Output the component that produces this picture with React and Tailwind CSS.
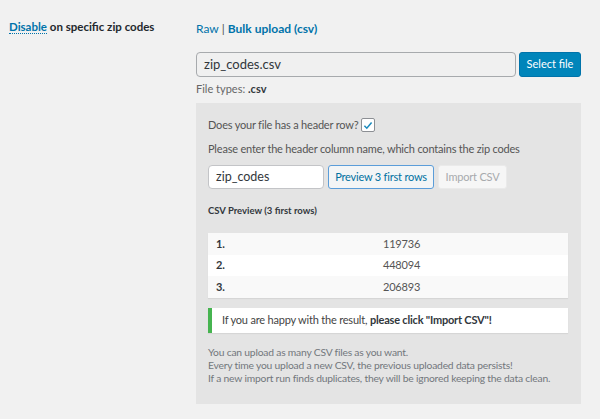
import React from 'react';

const font = { fontFamily: 'Lato, "Noto Sans", sans-serif' };

export default function App() {
  return (
    <div className="w-[600px] h-[419px] bg-[#f1f1f1] text-[#444] overflow-hidden flex whitespace-nowrap" style={font}>
      {/* Label column */}
      <div className="w-[196px] pl-[9px] pt-[13px]">
        <span className="text-[11.5px] font-bold text-[#23282d]">
          <span className="text-[#0073aa] border-b border-dotted border-[#0073aa]">Disable</span> on specific zip codes
        </span>
      </div>

      {/* Field column */}
      <div className="w-[385px] pt-[19px] flex flex-col">
        <div className="text-[12px] leading-[20px]">
          <span className="text-[#0073aa]">Raw</span>
          <span className="text-[#555] mx-[3px]">|</span>
          <span className="text-[#0073aa] font-bold">Bulk upload (csv)</span>
        </div>

        <div className="flex gap-[3px] mt-[13px]">
          <div className="w-[320px] h-[25px] border border-[#a7aaad] rounded-[4px] bg-[#f0f0f0] px-[7px] flex items-center text-[13px] text-[#32373c]">
            zip_codes.csv
          </div>
          <button className="w-[62px] h-[25px] rounded-[3px] bg-[#0085ba] text-white text-[11px] border border-[#0073aa]">
            Select file
          </button>
        </div>
        <div className="text-[11px] text-[#666] mt-[3px] leading-[18px]">
          File types: <b className="text-[#32373c] font-bold">.csv</b>
        </div>

        {/* Panel */}
        <div className="mt-[5px] w-[385px] h-[301px] bg-[#e4e4e4] px-[12px] pt-[13px] flex flex-col text-[11px] tracking-[-0.2px] text-[#555]">
          <div className="flex items-center gap-[3px] h-[18px]">
            <span>Does your file has a header row?</span>
            <span className="w-[14px] h-[14px] bg-white border border-[#8c8f94] rounded-[2px] flex items-center justify-center">
              <svg viewBox="0 0 20 20" className="w-[13px] h-[13px]">
                <path d="M4 10.5 L8 14.5 L16 5" fill="none" stroke="#1e8cbe" strokeWidth="2.6" />
              </svg>
            </span>
          </div>
          <div className="mt-[6px] leading-[18px]">Please enter the header column name, which contains the zip codes</div>

          <div className="flex gap-[4px] mt-[7px]">
            <div className="w-[116px] h-[24px] bg-white border border-[#c3c4c7] rounded-[4px] px-[7px] flex items-center text-[12.5px] tracking-normal text-[#32373c]">
              zip_codes
            </div>
            <button className="w-[106px] h-[24px] rounded-[3px] border border-[#5b9dd9] bg-[#f3f5f6] text-[#0071a1] text-[11px]">
              Preview 3 first rows
            </button>
            <button className="w-[69px] h-[24px] rounded-[3px] border border-[#eaeaea] bg-[#f6f6f6] text-[#a7aaad] text-[11px]">
              Import CSV
            </button>
          </div>

          <div className="mt-[14px] text-[9.5px] leading-[16px] font-bold text-[#32373c] tracking-normal">CSV Preview (3 first rows)</div>

          <div className="mt-[14px] w-[360px] bg-white shadow-[0_1px_1px_rgba(0,0,0,0.06)] text-[11px]">
            {[
              ['1.', '119736'],
              ['2.', '448094'],
              ['3.', '206893'],
            ].map(([n, v], i) => (
              <div key={n} className={`grid grid-cols-[175px_1fr] h-[21.7px] items-center ${i % 2 === 0 ? 'bg-[#f9f9f9]' : 'bg-white'}`}>
                <span className="pl-[8px] font-bold text-[#32373c]">{n}</span>
                <span className="text-[#555]">{v}</span>
              </div>
            ))}
          </div>

          <div className="mt-[10px] w-[360px] h-[25px] bg-white border-l-4 border-[#46b450] shadow-[0_1px_1px_rgba(0,0,0,0.06)] flex items-center pl-[10px] text-[11px] text-[#444]">
            If you are happy with the result,&nbsp;<b className="font-bold text-[#32373c]">please click "Import CSV"!</b>
          </div>

          <div className="mt-[13px] text-[10.3px] leading-[13px] text-[#72777c]">
            <div>You can upload as many CSV files as you want.</div>
            <div>Every time you upload a new CSV, the previous uploaded data persists!</div>
            <div>If a new import run finds duplicates, they will be ignored keeping the data clean.</div>
          </div>
        </div>
      </div>
    </div>
  );
}
